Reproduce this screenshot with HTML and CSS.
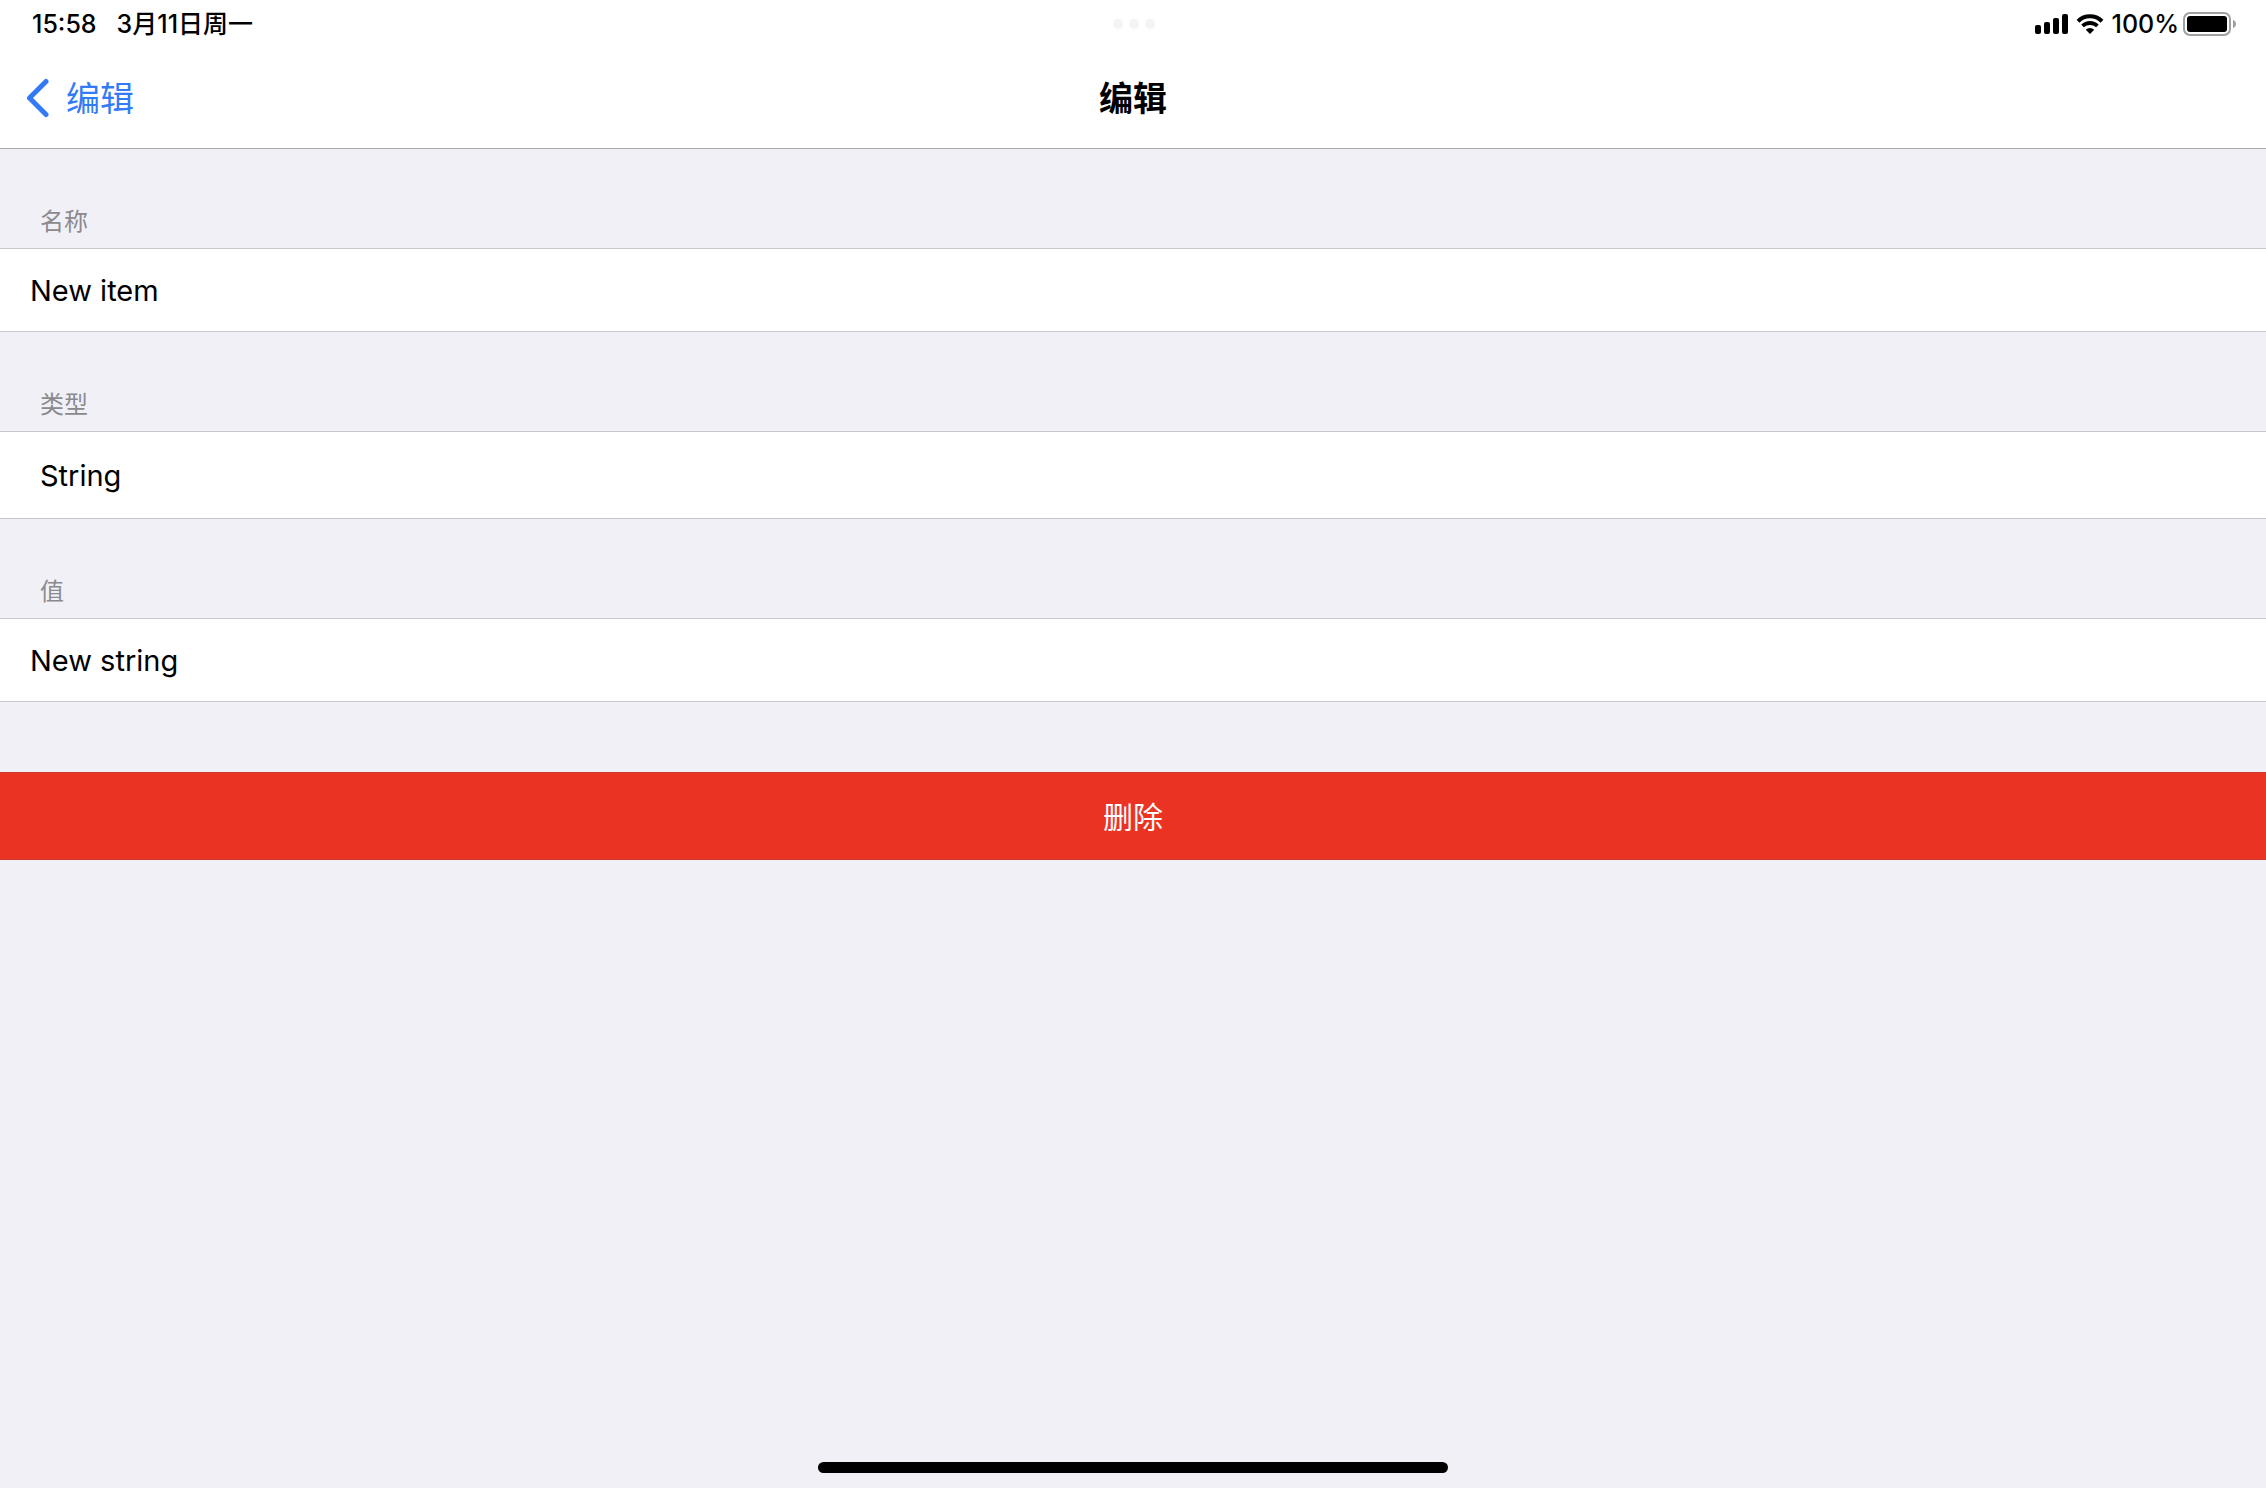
FILE: index.html
```html
<!DOCTYPE html>
<html lang="zh-CN">
<head>
    <meta charset="UTF-8">
    <meta name="viewport" content="width=device-width, initial-scale=1.0">
    <title>编辑</title>
    <link rel="stylesheet" href="styles.css">
</head>
<body>
    <div class="status-bar">
        <div class="status-left">
            <span>15:58</span>
            <span>3月11日周一</span>
        </div>
        <div class="status-dots">
            <i class="dot"></i>
            <i class="dot"></i>
            <i class="dot"></i>
        </div>
        <div class="status-right">
            <svg width="33" height="20" viewBox="0 0 33 20">
                <rect x="0" y="11" width="6" height="9" rx="2"/>
                <rect x="9" y="8" width="6" height="12" rx="2"/>
                <rect x="18" y="4" width="6" height="16" rx="2"/>
                <rect x="27" y="0" width="6" height="20" rx="2"/>
            </svg>
            <svg width="28" height="20" viewBox="0 0 28 20">
                <path d="M2 7.2a17.2 17.2 0 0 1 24 0" fill="none" stroke="#000" stroke-width="4"/>
                <path d="M6.6 12a10.6 10.6 0 0 1 14.8 0" fill="none" stroke="#000" stroke-width="3.8"/>
                <path d="M14 20l-4.2-4.2a6 6 0 0 1 8.4 0z"/>
            </svg>
            <div class="power">
                <span>100%</span>
                <svg width="53" height="24" viewBox="0 0 53 24">
                    <rect x="1" y="1" width="46" height="22" rx="6" fill="none" stroke="#a0a0a0" stroke-width="2"/>
                    <rect x="4" y="4" width="40" height="16" rx="3"/>
                    <path d="M50 8c4 1 4 7 0 8z" fill="#a0a0a0"/>
                </svg>
            </div>
        </div>
    </div>

    <header class="nav">
        <a class="back" href="#">
            <svg width="24" height="40" viewBox="0 0 24 40">
                <path d="M20 3.500L3.500 20L20 36.500" fill="none" stroke="#337bf6" stroke-width="5" stroke-linecap="round" stroke-linejoin="round"/>
            </svg>
            <span class="nav-text">编辑</span>
        </a>
        <h1 class="nav-text">编辑</h1>
    </header>

    <form class="form">
        <label class="label" for="name">名称</label>
        <input class="field" type="text" id="name" value="New item">

        <label class="label" for="type">类型</label>
        <select class="field field-select" id="type">
            <option>String</option>
        </select>

        <label class="label" for="value">值</label>
        <input class="field" type="text" id="value" value="New string">

        <button class="delete-btn" type="button">删除</button>
    </form>

    <div class="home-indicator"></div>
</body>
</html>
```

FILE: styles.css
```css
* {
    margin: 0;
    padding: 0;
    box-sizing: border-box;
}

body {
    font-family: Inter, "Noto Sans CJK SC", sans-serif;
    background: #f1f0f6;
    color: #000;
    min-height: 100vh;
    display: flex;
    flex-direction: column;
}

/* 状态栏 */
.status-bar {
    display: grid;
    grid-template-columns: 1fr auto 1fr;
    align-items: center;
    height: 48px;
    padding: 0 30px 0 32px;
    background: #fff;
    font-size: 25px;
    font-weight: 500;
    line-height: 48px;
}

.status-left {
    display: flex;
    gap: 20px;
}

.status-dots {
    display: flex;
    gap: 6px;
}

.dot {
    width: 10px;
    height: 10px;
    border-radius: 50%;
    background: #f4f4f4;
}

.status-right {
    display: flex;
    align-items: center;
    justify-content: flex-end;
    gap: 8px;
}

.power {
    display: flex;
    align-items: center;
    gap: 4px;
}

/* 导航栏 */
.nav {
    display: grid;
    grid-template-columns: 1fr auto 1fr;
    align-items: center;
    height: 101px;
    padding: 0 26px;
    background: #fff;
    border-bottom: 1px solid #a9a9ae;
}

.back {
    display: flex;
    align-items: center;
    justify-self: start;
    gap: 16px;
    color: #337bf6;
    text-decoration: none;
}

.nav-text {
    padding-bottom: 4px;
    font-size: 34px;
}

.nav h1 {
    font-weight: 700;
}

/* 表单 */
.form {
    display: flex;
    flex-direction: column;
}

.label {
    padding: 55px 40px 8px;
    color: #8a8a8e;
    font-size: 24px;
    line-height: 36px;
}

.field {
    width: 100%;
    height: 84px;
    padding: 0 30px;
    border: solid #c8c7cc;
    border-width: 1px 0;
    border-radius: 0;
    background: #fff;
    color: #000;
    font-family: inherit;
    font-size: 29px;
    outline: none;
}

.field-select {
    height: 88px;
    padding: 0 40px;
    appearance: none;
}

.delete-btn {
    height: 88px;
    margin-top: 70px;
    padding-bottom: 2px;
    border: solid #c73a30;
    border-width: 1px 0;
    background: #eb3323;
    color: #fff;
    font-family: inherit;
    font-size: 30px;
    cursor: pointer;
}

.home-indicator {
    width: 630px;
    max-width: 60%;
    height: 11px;
    margin: auto auto 15px;
    border-radius: 6px;
    background: #000;
}
```
